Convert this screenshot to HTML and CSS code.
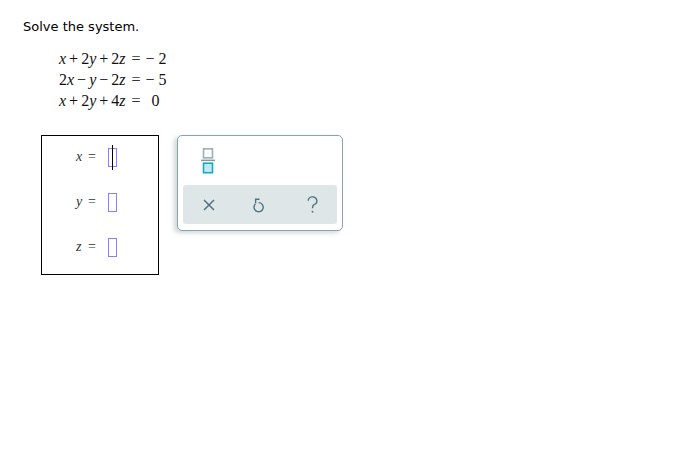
FILE: index.html
```html
<!DOCTYPE html>
<html>
<head>
<meta charset="utf-8">
<link rel="stylesheet" href="styles.css">
</head>
<body>
<div class="page">
  <p class="prompt">Solve the system.</p>
  <table class="system">
    <tr><td class="lhs"><i>x</i><span class="op">+</span>2<i>y</i><span class="op">+</span>2<i>z</i></td><td class="eq">=</td><td class="rhs"><span class="neg">−</span>2</td></tr>
    <tr><td class="lhs">2<i>x</i><span class="op">−</span><i>y</i><span class="op">−</span>2<i>z</i></td><td class="eq">=</td><td class="rhs"><span class="neg">−</span>5</td></tr>
    <tr><td class="lhs"><i>x</i><span class="op">+</span>2<i>y</i><span class="op">+</span>4<i>z</i></td><td class="eq">=</td><td class="rhs zero">0</td></tr>
  </table>
  <div class="work">
    <div class="answers">
      <div class="arow"><span class="var"><i>x</i></span><span class="veq">=</span><span class="slot"><span class="caret"></span></span></div>
      <div class="arow"><span class="var"><i>y</i></span><span class="veq">=</span><span class="slot"></span></div>
      <div class="arow"><span class="var"><i>z</i></span><span class="veq">=</span><span class="slot"></span></div>
    </div>
    <div class="palette">
      <div class="tools">
        <svg class="frac" width="14" height="26" viewBox="0 0 14 26">
          <rect x="2.5" y="0.8" width="9" height="9" fill="#fff" stroke="#9aafb4" stroke-width="1.6"/>
          <rect x="0" y="11.6" width="14" height="1.5" fill="#7f9aa1"/>
          <rect x="2.5" y="15.2" width="9" height="9.5" fill="#bfeaf2" stroke="#18a9c1" stroke-width="1.6"/>
        </svg>
      </div>
      <div class="actions">
        <span class="cell">
          <svg width="12" height="12" viewBox="0 0 12 12"><path d="M1 1 L11 11 M11 1 L1 11" stroke="#4f7480" stroke-width="1.5" fill="none"/></svg>
        </span>
        <span class="cell">
          <svg width="13" height="16" viewBox="0 0 13 16"><path d="M3.3 7 A4.6 4.6 0 1 0 6.5 5.6" stroke="#4f7480" stroke-width="1.4" fill="none"/><path d="M7.5 2.2 H3.6 V6.5" stroke="#4f7480" stroke-width="1.4" fill="none"/></svg>
        </span>
        <span class="cell help">
          <svg width="11" height="18" viewBox="0 0 11 18"><path d="M1.2 4.8 A4.3 4 0 1 1 7 8.6 C5.6 9.4 5.5 10.3 5.5 12.3" stroke="#4f7480" stroke-width="1.4" fill="none"/><rect x="4.7" y="14.8" width="1.6" height="1.8" fill="#4f7480"/></svg>
        </span>
      </div>
    </div>
  </div>
</div>
</body>
</html>
```
FILE: styles.css
```css
html, body { margin: 0; padding: 0; background: #fff; }
.page { padding: 18px 0 0 23px; }
.prompt {
  margin: 0;
  font-family: "DejaVu Sans", Verdana, sans-serif;
  font-size: 13px;
  color: #000;
  line-height: 18px;
}
.system {
  margin: 12px 0 0 36px;
  border-collapse: collapse;
  font-family: "Liberation Serif", "Times New Roman", serif;
  font-size: 16px;
  color: #111;
}
.system td { padding: 0; height: 21px; line-height: 21px; white-space: nowrap; }
.system .lhs { text-align: right; }
.system .eq { padding: 0 5px 0 6px; color: #333; }
.system .rhs { text-align: left; }
.system .zero { padding-left: 6px; }
.op { padding: 0 3px; }
.neg { padding-right: 4px; }
.work { display: flex; align-items: flex-start; gap: 18px; margin: 24px 0 0 18px; }
.answers {
  width: 118px;
  height: 140px;
  box-sizing: border-box;
  border: 1px solid #000;
  display: flex;
  flex-direction: column;
  gap: 23px;
  padding: 10px 0 0 34px;
}
.arow {
  display: flex;
  align-items: center;
  height: 22px;
  font-family: "Liberation Serif", "Times New Roman", serif;
  font-size: 14px;
  color: #333;
}
.var { width: 12px; }
.veq { width: 12px; }
.slot {
  position: relative;
  margin-left: 8px;
  width: 7px;
  height: 17px;
  border: 1.5px solid #8a7dff;
}
.caret {
  position: absolute;
  left: 2.5px;
  top: -4px;
  width: 1px;
  height: 25px;
  background: #000;
}
.palette {
  width: 166px;
  height: 96px;
  box-sizing: border-box;
  border: 1px solid #8aa4aa;
  border-radius: 5px;
  box-shadow: -3px 2px 4px rgba(120, 140, 145, 0.35);
  padding: 5px;
  display: flex;
  flex-direction: column;
}
.tools { height: 44px; padding: 7px 0 0 18px; box-sizing: border-box; }
.frac { display: block; }
.actions {
  height: 39px;
  background: #dfe6e8;
  border-radius: 3px;
  display: flex;
  align-items: center;
  padding-left: 1px;
}
.cell { width: 50px; display: flex; justify-content: center; align-items: center; }
.cell svg { display: block; }
.help { margin-left: 4px; }
```
